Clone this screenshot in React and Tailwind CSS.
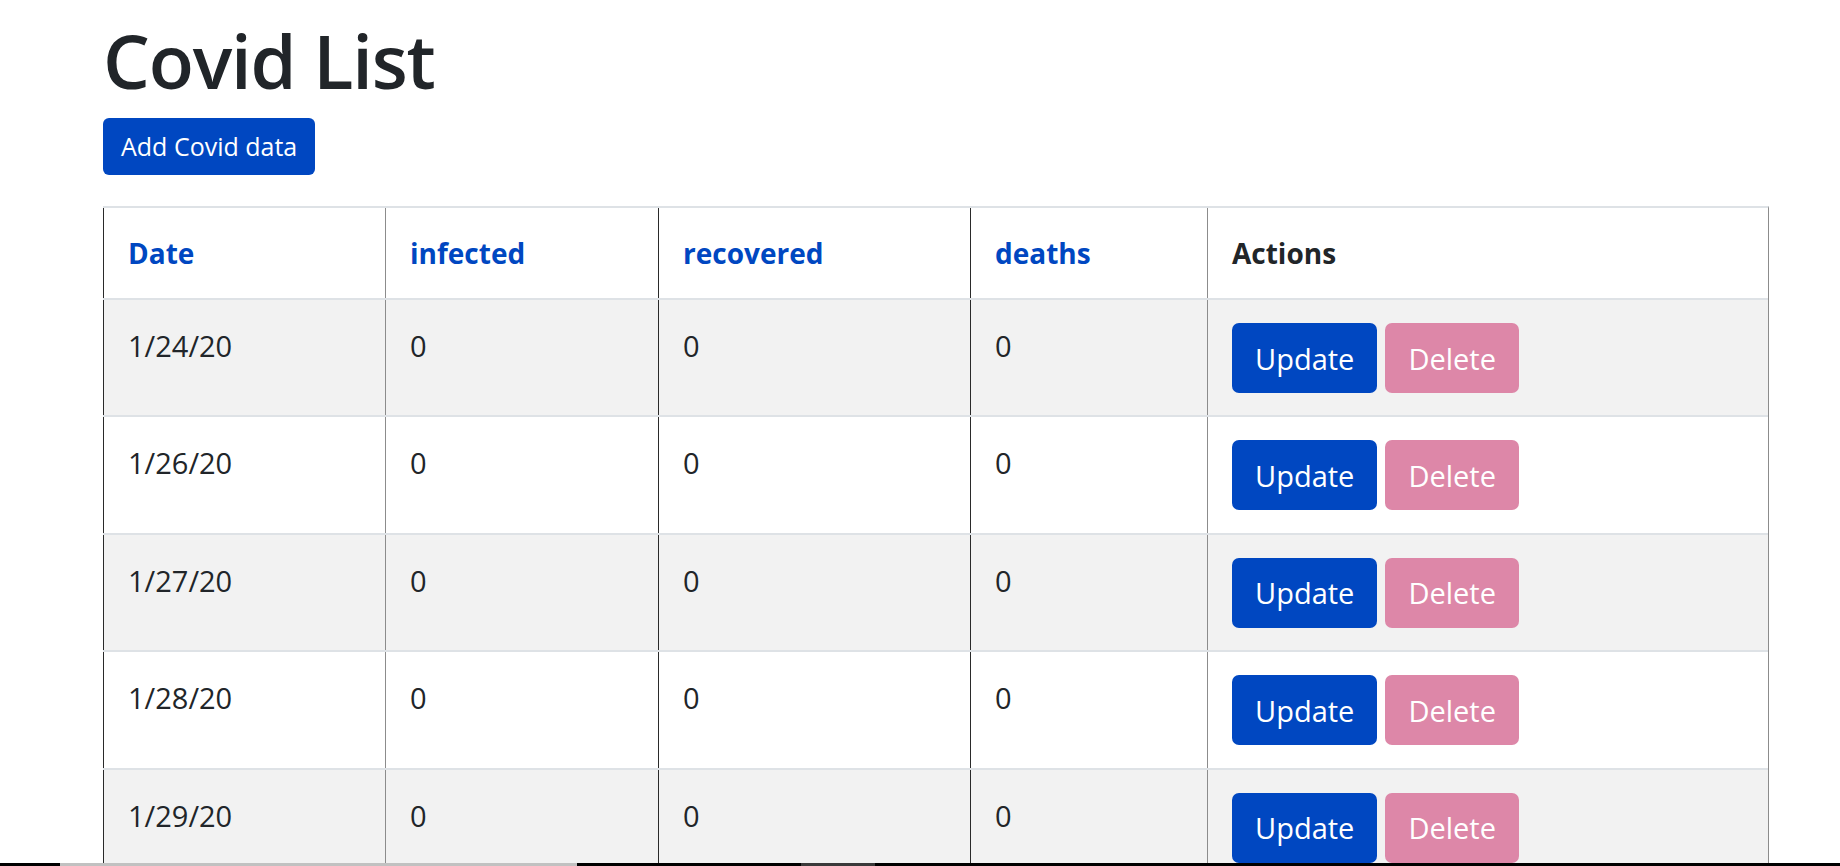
const FONT = { fontFamily: '"Open Sans", "Noto Sans", sans-serif' };

const COLUMNS = [
  { label: "Date", width: "w-[282px]", edge: "border-l-[#2a2a2a]", link: true },
  { label: "infected", width: "w-[273px]", edge: "border-l-[#8c8c8c]", link: true },
  { label: "recovered", width: "w-[312px]", edge: "border-l-[#2a2a2a]", link: true },
  { label: "deaths", width: "w-[237px]", edge: "border-l-[#2a2a2a]", link: true },
  { label: "Actions", width: "w-[561px]", edge: "border-l-[#8c8c8c]", link: false },
];

const ROWS = [
  { date: "1/24/20", infected: 0, recovered: 0, deaths: 0 },
  { date: "1/26/20", infected: 0, recovered: 0, deaths: 0 },
  { date: "1/27/20", infected: 0, recovered: 0, deaths: 0 },
  { date: "1/28/20", infected: 0, recovered: 0, deaths: 0 },
  { date: "1/29/20", infected: 0, recovered: 0, deaths: 0 },
];

function HeaderRow() {
  return (
    <div className="flex h-[92px] border-b-2 border-b-[#dee2e6]">
      {COLUMNS.map((c) => (
        <div key={c.label} className={`${c.width} ${c.edge} border-l flex items-center pl-6`}>
          <span className={`text-[28px] font-bold ${c.link ? "text-[#0047c1]" : "text-[#212529]"}`}>
            {c.label}
          </span>
        </div>
      ))}
    </div>
  );
}

function DataRow({ row, striped }) {
  const values = [row.date, row.infected, row.recovered, row.deaths];
  return (
    <div className={`flex h-[117.4px] border-b-2 border-b-[#dee2e6] ${striped ? "bg-[#f2f2f2]" : "bg-white"}`}>
      {values.map((v, i) => (
        <div key={i} className={`${COLUMNS[i].width} ${COLUMNS[i].edge} border-l pl-6 pt-[23px]`}>
          <span className="text-[29px] leading-[45px] text-[#212529]">{v}</span>
        </div>
      ))}
      <div className={`${COLUMNS[4].width} ${COLUMNS[4].edge} border-l pl-6 pt-[23px] flex items-start gap-2`}>
        <button className="h-[70px] px-[23px] rounded-[7px] bg-[#0047c1] text-white text-[29px] leading-none">
          Update
        </button>
        <button className="h-[70px] px-[23px] rounded-[7px] bg-[#dd87a8] text-white text-[29px] leading-none">
          Delete
        </button>
      </div>
    </div>
  );
}

export default function App() {
  return (
    <div className="min-h-screen bg-white text-[#212529]" style={FONT}>
      <div className="pl-[103px]">
        <h1 className="pt-[24px] text-[74px] font-semibold leading-none tracking-[-1.2px]">Covid List</h1>
        <button className="mt-[20px] h-[57px] px-[18px] rounded-[6px] bg-[#0047c1] text-white text-[25px] leading-none">
          Add Covid data
        </button>
        <div className="mt-[31px] w-[1666px] border-t-2 border-t-[#dee2e6] border-r border-r-[#8c8c8c]">
          <HeaderRow />
          {ROWS.map((r, i) => (
            <DataRow key={r.date} row={r} striped={i % 2 === 0} />
          ))}
        </div>
      </div>

      {/* thin scrollbar strip along the bottom of the window */}
      <div className="fixed bottom-0 left-0 right-0 h-[3px] bg-black flex">
        <div className="ml-[60px] w-[517px] bg-[#c1c1c1]" />
        <div className="ml-[224px] w-[74px] bg-[#3a3a3a]" />
      </div>
    </div>
  );
}
